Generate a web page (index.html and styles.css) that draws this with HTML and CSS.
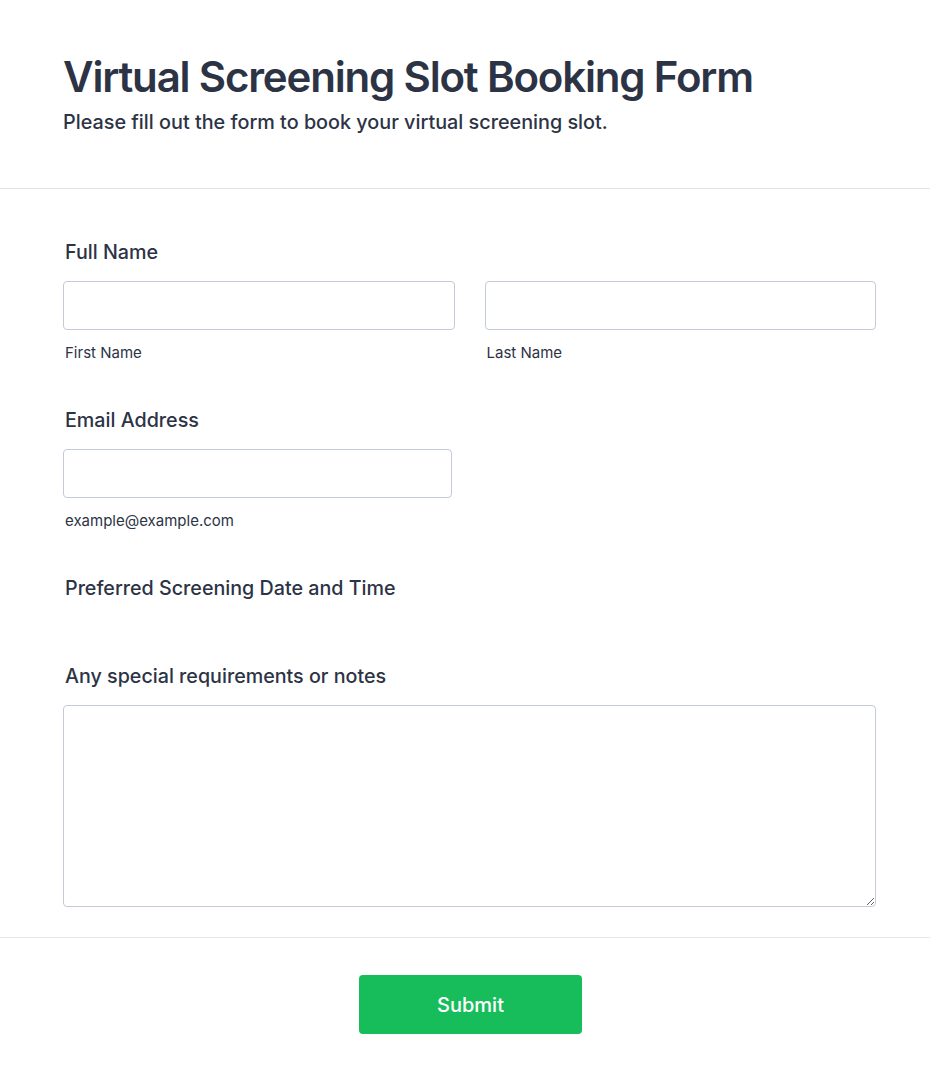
FILE: index.html
```html
<!DOCTYPE html>
<html lang="en">
<head>
    <meta charset="UTF-8">
    <meta name="viewport" content="width=device-width, initial-scale=1.0">
    <title>Virtual Screening Slot Booking Form</title>
    <link rel="stylesheet" href="styles.css">
</head>
<body>
    <!-- Form header -->
    <header class="form-header">
        <h1>Virtual Screening Slot Booking Form</h1>
        <p>Please fill out the form to book your virtual screening slot.</p>
    </header>

    <form class="form-body" onsubmit="return false;">
        <div class="field">
            <label class="field-label">Full Name</label>
            <div class="name-row">
                <div class="sub-field">
                    <input type="text" id="first-name">
                    <span class="sublabel">First Name</span>
                </div>
                <div class="sub-field">
                    <input type="text" id="last-name">
                    <span class="sublabel">Last Name</span>
                </div>
            </div>
        </div>

        <div class="field">
            <label class="field-label" for="email">Email Address</label>
            <div class="sub-field half">
                <input type="email" id="email">
                <span class="sublabel">example@example.com</span>
            </div>
        </div>

        <div class="field">
            <label class="field-label">Preferred Screening Date and Time</label>
            <div class="date-slot"></div>
        </div>

        <div class="field">
            <label class="field-label" for="notes">Any special requirements or notes</label>
            <textarea id="notes"></textarea>
        </div>
    </form>

    <div class="form-footer">
        <button type="submit" class="submit-btn">Submit</button>
    </div>
</body>
</html>
```

FILE: styles.css
```css
body {
    font-family: 'Inter', 'Liberation Sans', sans-serif;
    margin: 0;
    padding: 0;
    background: #ffffff;
    color: #2c3345;
}

.form-header {
    padding: 53px 54px 54px 63px;
    border-bottom: 1px solid #dfe3ea;
}

.form-header h1 {
    font-size: 42px;
    line-height: 48px;
    font-weight: 600;
    letter-spacing: -0.028em;
    margin: 0 0 9px 0;
}

.form-header p {
    font-size: 19.8px;
    line-height: 24px;
    font-weight: 500;
    margin: 0;
}

.form-body {
    display: flex;
    flex-direction: column;
    gap: 46px;
    padding: 51px 54px 30px 63px;
    border-bottom: 1px solid #e6e8ee;
}

.field {
    display: flex;
    flex-direction: column;
}

.field-label {
    font-size: 19.7px;
    line-height: 24px;
    font-weight: 500;
    margin: 0 0 17px 2px;
}

.name-row {
    display: flex;
    gap: 30px;
}

.sub-field {
    display: flex;
    flex-direction: column;
    flex: 1;
}

.sub-field.half {
    width: 389px;
    flex: none;
}

input,
textarea {
    box-sizing: border-box;
    width: 100%;
    border: 1px solid #c3cad8;
    border-radius: 4px;
    background: #ffffff;
    font-family: inherit;
    font-size: 16px;
    color: #2c3345;
    outline: none;
}

input {
    height: 49px;
    padding: 0 12px;
}

textarea {
    height: 202px;
    padding: 10px 12px;
    resize: vertical;
}

.sublabel {
    font-size: 15px;
    line-height: 18px;
    margin: 14px 0 0 2px;
    color: #2c3345;
}

.date-slot {
    height: 1px;
}

.form-footer {
    display: flex;
    justify-content: center;
    padding: 37px 0 50px 0;
}

.submit-btn {
    width: 223px;
    height: 59px;
    margin-left: 11px;
    background: #18bd5b;
    color: #ffffff;
    border: none;
    border-radius: 4px;
    font-family: inherit;
    font-size: 20px;
    font-weight: 500;
    cursor: pointer;
}
```
